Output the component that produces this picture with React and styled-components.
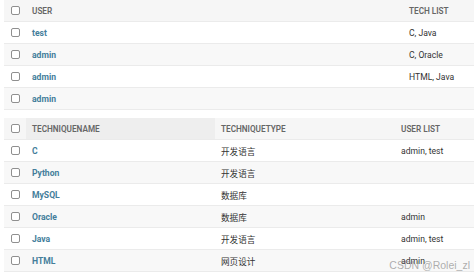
import styled, { createGlobalStyle } from "styled-components";

// Django admin 风格的两张列表
const GlobalStyle = createGlobalStyle`
  body {
    margin: 0;
    background: #fff;
    font-family: Roboto, "Noto Sans CJK SC", sans-serif;
  }
`;

const Page = styled.div`
  position: relative;
  width: 474px;
  height: 277px;
  overflow: hidden;
  padding-left: 4px;
  box-sizing: border-box;
`;

const Table = styled.div`
  display: flex;
  flex-direction: column;
  margin-bottom: 8px;
`;

const Row = styled.div`
  display: grid;
  grid-template-columns: ${(p) => p.$cols};
  height: 22px;
  box-sizing: border-box;
  border-bottom: 1px solid #ebebeb;
  background: ${(p) => (p.$header ? "#f6f6f6" : p.$alt ? "#f8f8f8" : "#fff")};
`;

const Cell = styled.div`
  display: flex;
  align-items: center;
  padding-left: 6px;
  font-size: 8.6px;
  color: #333;
  background: ${(p) => (p.$sorted ? "#eeeeee" : "transparent")};
  white-space: nowrap;
`;

const HeadCell = styled(Cell)`
  font-size: 8.2px;
  font-weight: 600;
  color: #666;
  text-transform: uppercase;
`;

const CheckCell = styled.div`
  display: flex;
  align-items: center;
  padding-left: 7px;
`;

const Check = styled.span`
  width: 7px;
  height: 7px;
  border: 1px solid #8f8f8f;
  border-radius: 2px;
  background: #fff;
`;

const Link = styled.a`
  color: #447e9b;
  font-weight: 700;
  text-decoration: none;
`;

const Watermark = styled.div`
  position: absolute;
  right: 4px;
  bottom: 6px;
  font-size: 10.5px;
  color: rgba(140, 140, 140, 0.7);
  font-family: "Liberation Sans", sans-serif;
`;

const users = [
  { name: "test", techs: "C, Java" },
  { name: "admin", techs: "C, Oracle" },
  { name: "admin", techs: "HTML, Java" },
  { name: "admin", techs: "" },
];

const techniques = [
  { name: "C", type: "开发语言", users: "admin, test" },
  { name: "Python", type: "开发语言", users: "" },
  { name: "MySQL", type: "数据库", users: "" },
  { name: "Oracle", type: "数据库", users: "admin" },
  { name: "Java", type: "开发语言", users: "admin, test" },
  { name: "HTML", type: "网页设计", users: "admin" },
];

const userCols = "22px 377px 1fr";
const techCols = "22px 189px 180px 1fr";

export default function App() {
  return (
    <Page>
      <GlobalStyle />
      <Table>
        <Row $cols={userCols} $header>
          <CheckCell><Check /></CheckCell>
          <HeadCell>User</HeadCell>
          <HeadCell>Tech list</HeadCell>
        </Row>
        {users.map((u, i) => (
          <Row key={i} $cols={userCols} $alt={i % 2 === 1}>
            <CheckCell><Check /></CheckCell>
            <Cell><Link href="#">{u.name}</Link></Cell>
            <Cell>{u.techs}</Cell>
          </Row>
        ))}
      </Table>
      <Table>
        <Row $cols={techCols} $header>
          <CheckCell><Check /></CheckCell>
          <HeadCell $sorted>Techniquename</HeadCell>
          <HeadCell>Techniquetype</HeadCell>
          <HeadCell>User list</HeadCell>
        </Row>
        {techniques.map((t, i) => (
          <Row key={t.name} $cols={techCols} $alt={i % 2 === 1}>
            <CheckCell><Check /></CheckCell>
            <Cell><Link href="#">{t.name}</Link></Cell>
            <Cell>{t.type}</Cell>
            <Cell>{t.users}</Cell>
          </Row>
        ))}
      </Table>
      <Watermark>CSDN @Rolei_zl</Watermark>
    </Page>
  );
}
